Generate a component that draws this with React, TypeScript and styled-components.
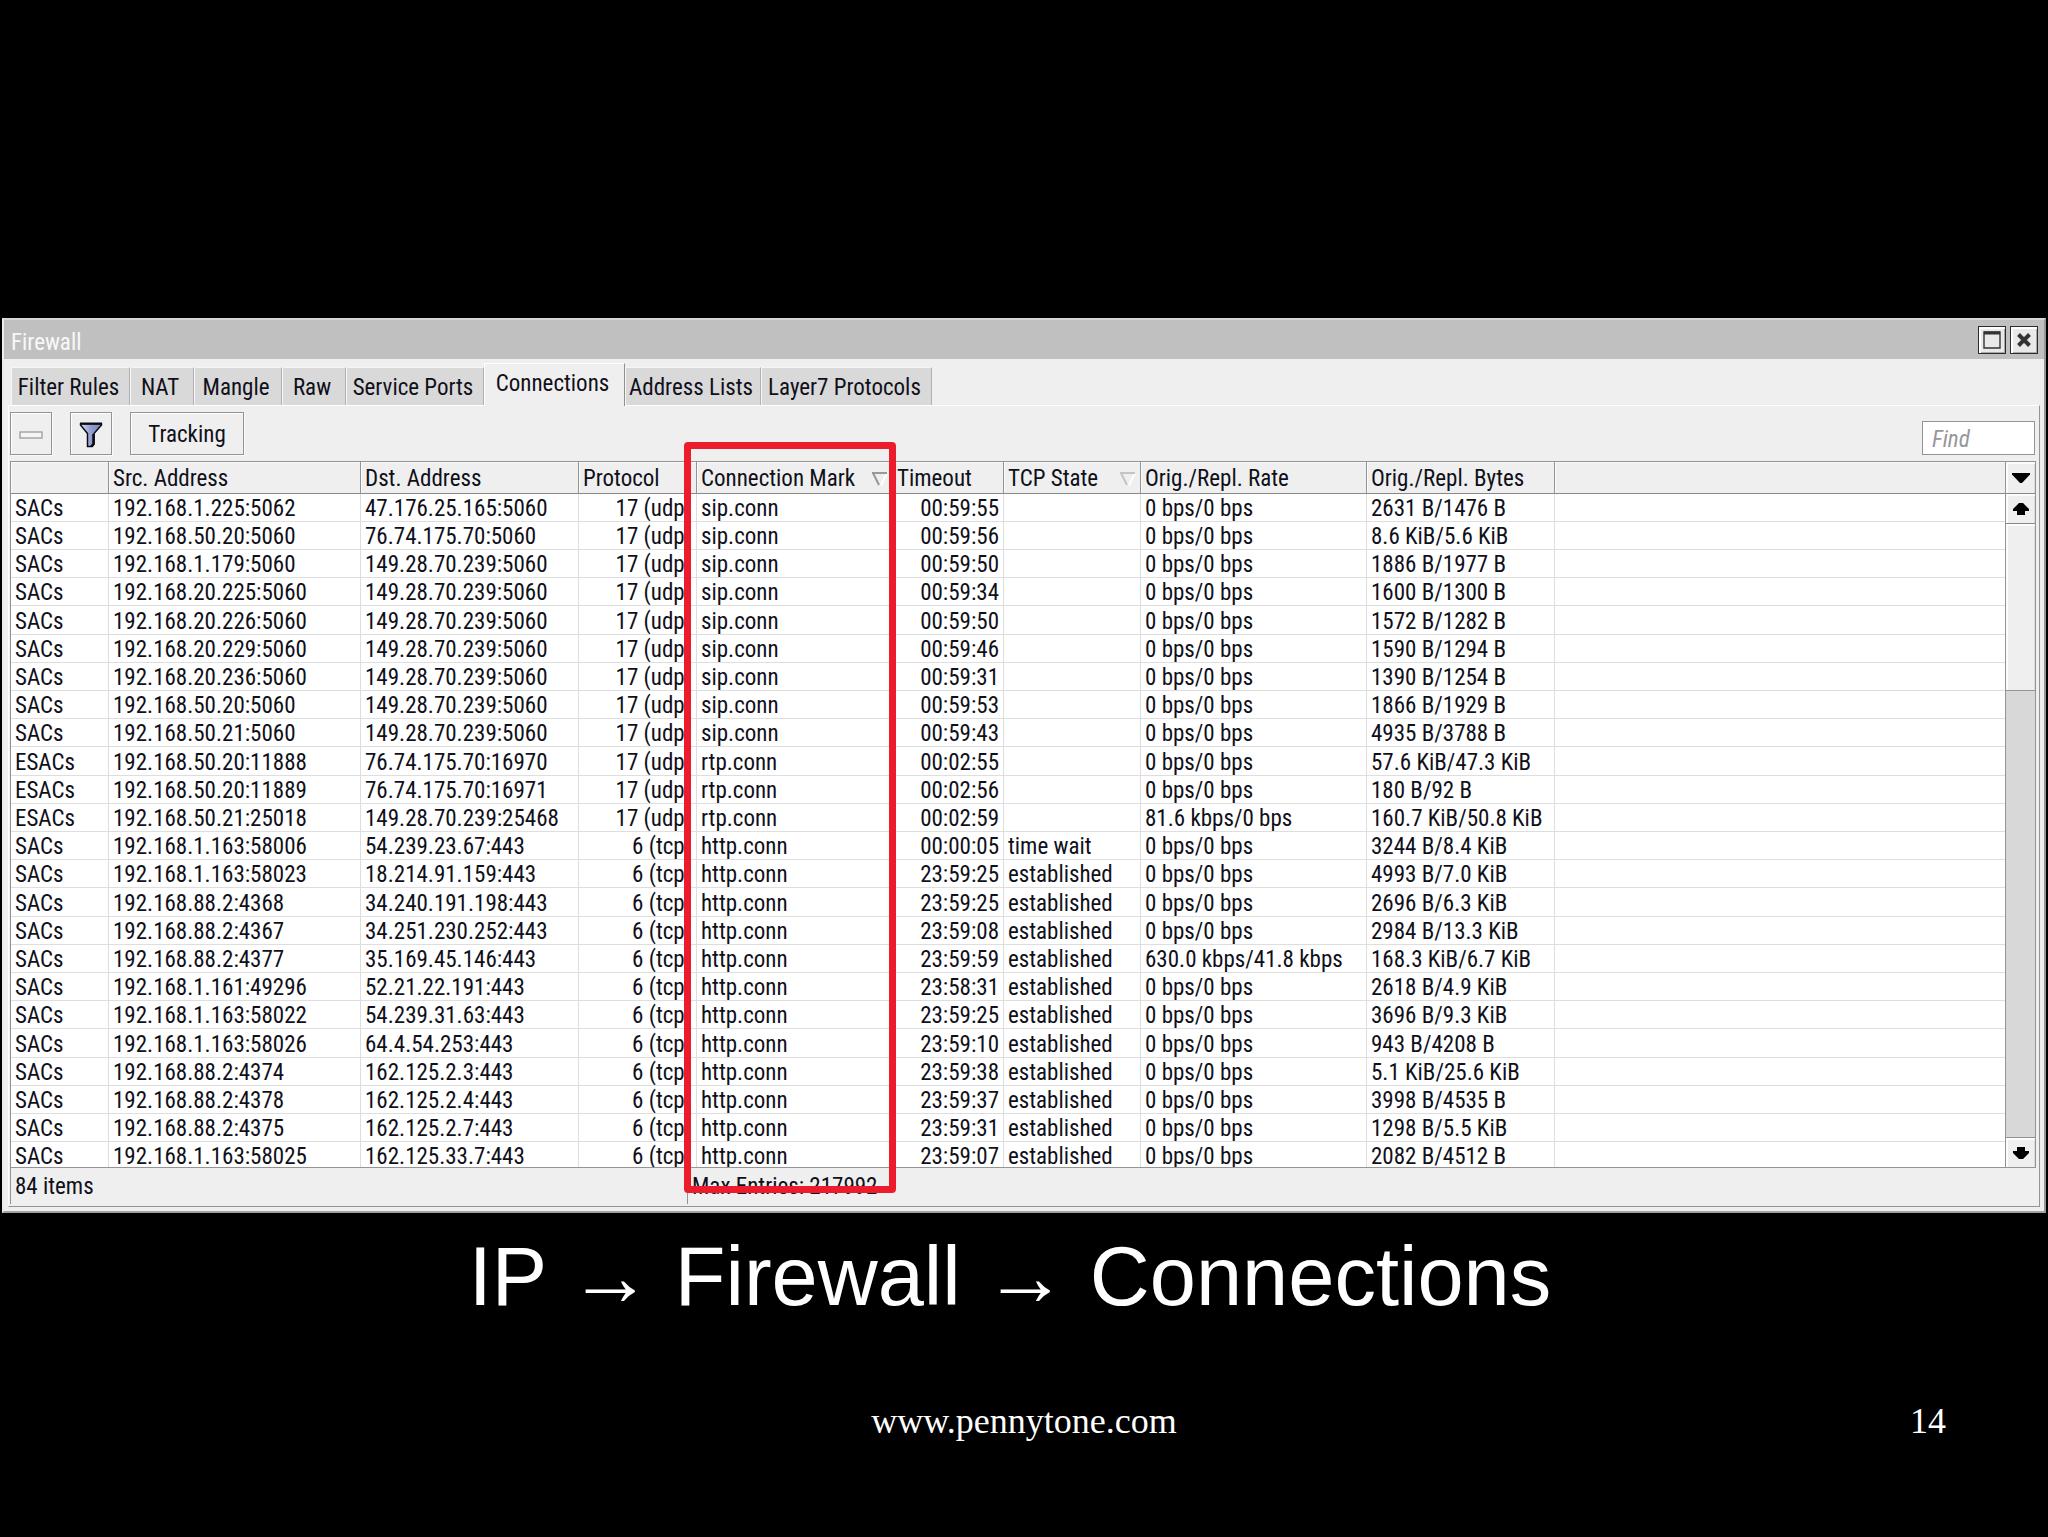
import React from "react";
import styled, { createGlobalStyle } from "styled-components";

const GlobalStyle = createGlobalStyle`
  *, *::before, *::after { box-sizing: border-box; }
  body { margin: 0; background: #000; }
  button, input { font: inherit; color: inherit; border-radius: 0; }
`;

const LINE = "#949494";
const FACE = "#efefef";

const Slide = styled.main`
  min-height: 100vh;
  padding: 318px 2px 0;
  background: #000;
  color: #fff;
`;

const Window = styled.section`
  border: 2px solid;
  border-color: #d6d6d6 #979797 #a2a2a2 #ececec;
  background: ${FACE};
  color: #10101a;
  font-family: "Roboto Condensed", "Liberation Sans Narrow", "Arial Narrow", sans-serif;
  font-size: 23px;
  line-height: 28px;
`;

const TitleBar = styled.header`
  display: flex;
  align-items: center;
  justify-content: space-between;
  height: 39px;
  padding: 0 6px 0 7px;
  background: #c0c0c0;
`;

const Title = styled.h2`
  margin: 0;
  padding-top: 6px;
  font: inherit;
  color: #f8f8f8;
`;

const WindowButtons = styled.div`
  display: flex;
  gap: 4px;
`;

const WindowButton = styled.button`
  display: flex;
  align-items: center;
  justify-content: center;
  width: 28px;
  height: 28px;
  padding: 0;
  border: 1px solid #2c2c2c;
  background: #e9e9e9;
  box-shadow: inset 2px 2px #fff, inset -1px -1px #a8a8a8;
`;

const Tabs = styled.div`
  display: flex;
  align-items: flex-end;
  height: 46px;
  padding-left: 7px;
`;

const Tab = styled.button<{ $width: number; $active?: boolean }>`
  position: relative;
  z-index: ${(p) => (p.$active ? 1 : 0)};
  width: ${(p) => p.$width}px;
  height: ${(p) => (p.$active ? 43 : 38)}px;
  margin-bottom: ${(p) => (p.$active ? -1 : 0)}px;
  padding: ${(p) => (p.$active ? "0 4px 2px 0" : "2px 4px 0 0")};
  border: 0 solid;
  border-width: 1px 1px 0;
  border-color: ${(p) => (p.$active ? "#fff #8f8f8f #fff #fff" : "#f6f6f6 #b0b0b0 #fff #f6f6f6")};
  background: ${(p) => (p.$active ? FACE : "#d9d9d9")};
  white-space: nowrap;
`;

const Panel = styled.div`
  position: relative;
  margin: 0 4px;
  margin-bottom: 4px;
  padding: 6px 3px 2px 1px;
  border: 1px solid;
  border-color: #fff ${LINE} ${LINE} #fff;
`;

const Toolbar = styled.div`
  display: flex;
  gap: 18px;
  height: 43px;
  margin-bottom: 6px;
`;

const ToolButton = styled.button<{ $wide?: boolean }>`
  display: flex;
  align-items: center;
  justify-content: center;
  width: ${(p) => (p.$wide ? 114 : 42)}px;
  padding: 2px 0 0;
  border: 1px solid ${LINE};
  background: ${FACE};
  box-shadow: inset 1px 1px #fff, 1px 1px #fafafa;
`;

const Search = styled.input`
  align-self: flex-end;
  width: 113px;
  height: 34px;
  margin-left: auto;
  margin-right: 1px;
  padding: 2px 9px 0;
  border: 1px solid ${LINE};
  background: #fff;
  &::placeholder {
    color: #96969c;
    font-style: italic;
    opacity: 1;
  }
`;

const Grid = styled.div`
  display: flex;
  height: 707px;
  border: 1px solid ${LINE};
  background: #fff;
  overflow: hidden;
`;

const Table = styled.table`
  flex: 1;
  width: 100%;
  align-self: flex-start;
  table-layout: fixed;
  border-collapse: separate;
  border-spacing: 0;
`;

const Th = styled.th`
  height: 32px;
  padding: 3px 4px 0;
  border-right: 1px solid ${LINE};
  border-bottom: 1px solid #888;
  background: ${FACE};
  box-shadow: inset 1px 1px #fafafa;
  font-weight: normal;
  text-align: left;
  white-space: nowrap;
  overflow: hidden;
  &:last-child { border-right: 0; }
`;

const HeadLabel = styled.span`
  display: flex;
  align-items: center;
  justify-content: space-between;
`;

const Row = styled.tr`
  height: 28px;
  &:nth-child(5n) { height: 29px; }
`;

const Td = styled.td<{ $right?: boolean }>`
  padding: 2px 4px 0;
  border-right: 1px solid #dedede;
  border-bottom: 1px solid #dedede;
  line-height: 25px;
  text-align: ${(p) => (p.$right ? "right" : "left")};
  white-space: nowrap;
  overflow: hidden;
  &:last-child { border-right: 0; }
`;

const ScrollBar = styled.div`
  display: flex;
  flex-direction: column;
  width: 30px;
  border-left: 1px solid ${LINE};
  background: #d8d8d8;
`;

const ScrollButton = styled.button<{ $head?: boolean }>`
  display: flex;
  align-items: center;
  justify-content: center;
  height: ${(p) => (p.$head ? 32 : 30)}px;
  padding: 0;
  border: 0;
  border-bottom: 1px solid #888;
  background: ${FACE};
  box-shadow: inset 2px 2px #fcfcfc, inset -1px 0 #dcdcdc;
`;

const Thumb = styled.div`
  height: 167px;
  border-bottom: 1px solid ${LINE};
  background: ${FACE};
  box-shadow: inset 2px 2px #fcfcfc, inset -1px 0 #dcdcdc;
`;

const DownButton = styled(ScrollButton)`
  margin-top: auto;
  border-top: 1px solid ${LINE};
  border-bottom: 0;
`;

const StatusBar = styled.footer`
  display: flex;
  height: 36px;
  border-left: 1px solid ${LINE};
`;

const StatusCell = styled.div<{ $first?: boolean }>`
  width: ${(p) => (p.$first ? "677px" : "auto")};
  padding: 5px 4px 0;
  border-right: ${(p) => (p.$first ? `1px solid ${LINE}` : "0")};
`;

const Highlight = styled.div`
  position: absolute;
  top: 36px;
  left: 675px;
  width: 212px;
  height: 751px;
  border: 7px solid #ed1c2c;
  border-radius: 4px;
  pointer-events: none;
`;

const Caption = styled.h1`
  margin: 18px 28px 0 0;
  font: 83px/92px "Liberation Sans", Arial, sans-serif;
  text-align: center;
`;

const Footer = styled.footer`
  display: grid;
  grid-template-columns: 1fr auto 1fr;
  margin-top: 78px;
  padding: 0 100px;
  font: 36px/40px "Liberation Serif", "Times New Roman", serif;
`;

const Site = styled.span`
  grid-column: 2;
`;

const PageNumber = styled.span`
  text-align: right;
`;

const MarkerIcon = ({ faint }: { faint?: boolean }) => (
  <svg width="16" height="14" viewBox="0 0 16 14" fill="none" aria-hidden="true">
    <path d="M15 1 9 13" stroke="#fff" strokeWidth="2" />
    <path d="M0 1H15M1 1L7 13" stroke={faint ? "#c4c4c4" : "#989898"} strokeWidth="2" />
  </svg>
);

const MaximizeIcon = () => (
  <svg width="18" height="18" viewBox="0 0 18 18" aria-hidden="true">
    <path d="M1 1H17V17H1Z" fill="none" stroke="#333" strokeWidth="1.4" />
    <path d="M1 2H17" stroke="#333" strokeWidth="3" />
  </svg>
);

const CloseIcon = () => (
  <svg width="14" height="14" viewBox="0 0 14 14" aria-hidden="true">
    <path d="M1.500 1.500 12.500 12.500M12.500 1.500 1.500 12.500" stroke="#333" strokeWidth="4" />
  </svg>
);

const RemoveIcon = () => (
  <svg width="24" height="8" viewBox="0 0 24 8" aria-hidden="true">
    <rect x="1" y="1" width="22" height="6" fill="#f5f5f5" stroke="#a2a2a2" strokeWidth="1.4" />
  </svg>
);

const FunnelIcon = () => (
  <svg width="24" height="26" viewBox="0 0 24 26" aria-hidden="true">
    <defs>
      <linearGradient id="funnel" x1="0" x2="1">
        <stop offset="0" stopColor="#d5dcf2" />
        <stop offset="0.5" stopColor="#8f9dd0" />
        <stop offset="1" stopColor="#7483bb" />
      </linearGradient>
    </defs>
    <path d="M1.500 2H22.500V3L15 11.500V22L13 24.500H8.500V11.500L1.500 3Z" fill="url(#funnel)" stroke="#0a0a12" strokeWidth="1.500" />
    <path d="M1 1.500H23" stroke="#0a0a12" strokeWidth="2" />
    <path d="M14.500 12V22L12.500 24.500" fill="none" stroke="#0a0a12" strokeWidth="2.500" />
  </svg>
);

const MenuIcon = () => (
  <svg width="18" height="10" viewBox="0 0 18 10" aria-hidden="true">
    <path d="M0 0H18V1.500L10 10H8L0 1.500Z" />
  </svg>
);

const ArrowIcon = ({ down }: { down?: boolean }) => (
  <svg width="16" height="12" viewBox="0 0 16 12" aria-hidden="true">
    <path d={down ? "M4 0H12V4H16V6L10 12H6L0 6V4H4Z" : "M4 12H12V8H16V6L10 0H6L0 6V8H4Z"} />
  </svg>
);

const tabs = [
  { label: "Filter Rules", width: 119 },
  { label: "NAT", width: 64 },
  { label: "Mangle", width: 88 },
  { label: "Raw", width: 64 },
  { label: "Service Ports", width: 138 },
  { label: "Connections", width: 141, active: true },
  { label: "Address Lists", width: 136 },
  { label: "Layer7 Protocols", width: 171 },
];

const columns: { label: string; width?: number; marker?: "strong" | "faint" }[] = [
  { label: "", width: 98 },
  { label: "Src. Address", width: 252 },
  { label: "Dst. Address", width: 218 },
  { label: "Protocol", width: 118 },
  { label: "Connection Mark", width: 196, marker: "strong" },
  { label: "Timeout", width: 111 },
  { label: "TCP State", width: 137, marker: "faint" },
  { label: "Orig./Repl. Rate", width: 226 },
  { label: "Orig./Repl. Bytes", width: 188 },
  { label: "" },
];

const UDP = "17 (udp)";
const TCP = "6 (tcp)";
const IDLE = "0 bps/0 bps";

const rows: string[][] = [
  ["SACs", "192.168.1.225:5062", "47.176.25.165:5060", UDP, "sip.conn", "00:59:55", "", IDLE, "2631 B/1476 B"],
  ["SACs", "192.168.50.20:5060", "76.74.175.70:5060", UDP, "sip.conn", "00:59:56", "", IDLE, "8.6 KiB/5.6 KiB"],
  ["SACs", "192.168.1.179:5060", "149.28.70.239:5060", UDP, "sip.conn", "00:59:50", "", IDLE, "1886 B/1977 B"],
  ["SACs", "192.168.20.225:5060", "149.28.70.239:5060", UDP, "sip.conn", "00:59:34", "", IDLE, "1600 B/1300 B"],
  ["SACs", "192.168.20.226:5060", "149.28.70.239:5060", UDP, "sip.conn", "00:59:50", "", IDLE, "1572 B/1282 B"],
  ["SACs", "192.168.20.229:5060", "149.28.70.239:5060", UDP, "sip.conn", "00:59:46", "", IDLE, "1590 B/1294 B"],
  ["SACs", "192.168.20.236:5060", "149.28.70.239:5060", UDP, "sip.conn", "00:59:31", "", IDLE, "1390 B/1254 B"],
  ["SACs", "192.168.50.20:5060", "149.28.70.239:5060", UDP, "sip.conn", "00:59:53", "", IDLE, "1866 B/1929 B"],
  ["SACs", "192.168.50.21:5060", "149.28.70.239:5060", UDP, "sip.conn", "00:59:43", "", IDLE, "4935 B/3788 B"],
  ["ESACs", "192.168.50.20:11888", "76.74.175.70:16970", UDP, "rtp.conn", "00:02:55", "", IDLE, "57.6 KiB/47.3 KiB"],
  ["ESACs", "192.168.50.20:11889", "76.74.175.70:16971", UDP, "rtp.conn", "00:02:56", "", IDLE, "180 B/92 B"],
  ["ESACs", "192.168.50.21:25018", "149.28.70.239:25468", UDP, "rtp.conn", "00:02:59", "", "81.6 kbps/0 bps", "160.7 KiB/50.8 KiB"],
  ["SACs", "192.168.1.163:58006", "54.239.23.67:443", TCP, "http.conn", "00:00:05", "time wait", IDLE, "3244 B/8.4 KiB"],
  ["SACs", "192.168.1.163:58023", "18.214.91.159:443", TCP, "http.conn", "23:59:25", "established", IDLE, "4993 B/7.0 KiB"],
  ["SACs", "192.168.88.2:4368", "34.240.191.198:443", TCP, "http.conn", "23:59:25", "established", IDLE, "2696 B/6.3 KiB"],
  ["SACs", "192.168.88.2:4367", "34.251.230.252:443", TCP, "http.conn", "23:59:08", "established", IDLE, "2984 B/13.3 KiB"],
  ["SACs", "192.168.88.2:4377", "35.169.45.146:443", TCP, "http.conn", "23:59:59", "established", "630.0 kbps/41.8 kbps", "168.3 KiB/6.7 KiB"],
  ["SACs", "192.168.1.161:49296", "52.21.22.191:443", TCP, "http.conn", "23:58:31", "established", IDLE, "2618 B/4.9 KiB"],
  ["SACs", "192.168.1.163:58022", "54.239.31.63:443", TCP, "http.conn", "23:59:25", "established", IDLE, "3696 B/9.3 KiB"],
  ["SACs", "192.168.1.163:58026", "64.4.54.253:443", TCP, "http.conn", "23:59:10", "established", IDLE, "943 B/4208 B"],
  ["SACs", "192.168.88.2:4374", "162.125.2.3:443", TCP, "http.conn", "23:59:38", "established", IDLE, "5.1 KiB/25.6 KiB"],
  ["SACs", "192.168.88.2:4378", "162.125.2.4:443", TCP, "http.conn", "23:59:37", "established", IDLE, "3998 B/4535 B"],
  ["SACs", "192.168.88.2:4375", "162.125.2.7:443", TCP, "http.conn", "23:59:31", "established", IDLE, "1298 B/5.5 KiB"],
  ["SACs", "192.168.1.163:58025", "162.125.33.7:443", TCP, "http.conn", "23:59:07", "established", IDLE, "2082 B/4512 B"],
];

export default function App() {
  return (
    <Slide>
      <GlobalStyle />
      <Window>
        <TitleBar>
          <Title>Firewall</Title>
          <WindowButtons>
            <WindowButton aria-label="Maximize"><MaximizeIcon /></WindowButton>
            <WindowButton aria-label="Close"><CloseIcon /></WindowButton>
          </WindowButtons>
        </TitleBar>
        <Tabs role="tablist">
          {tabs.map((t) => (
            <Tab key={t.label} role="tab" aria-selected={!!t.active} $active={t.active} $width={t.width}>
              {t.label}
            </Tab>
          ))}
        </Tabs>
        <Panel>
          <Toolbar>
            <ToolButton aria-label="Remove"><RemoveIcon /></ToolButton>
            <ToolButton aria-label="Filter"><FunnelIcon /></ToolButton>
            <ToolButton $wide>Tracking</ToolButton>
            <Search type="search" placeholder="Find" aria-label="Find" />
          </Toolbar>
          <Grid>
            <Table>
              <colgroup>
                {columns.map((c, i) => <col key={i} width={c.width} />)}
              </colgroup>
              <thead>
                <tr>
                  {columns.map((c, i) => (
                    <Th key={i} scope="col">
                      <HeadLabel>
                        {c.label}
                        {c.marker && <MarkerIcon faint={c.marker === "faint"} />}
                      </HeadLabel>
                    </Th>
                  ))}
                </tr>
              </thead>
              <tbody>
                {rows.map((r, i) => (
                  <Row key={i}>
                    {r.map((v, j) => <Td key={j} $right={j === 3 || j === 5}>{v}</Td>)}
                    <Td />
                  </Row>
                ))}
              </tbody>
            </Table>
            <ScrollBar>
              <ScrollButton $head aria-label="Choose columns"><MenuIcon /></ScrollButton>
              <ScrollButton aria-label="Scroll up"><ArrowIcon /></ScrollButton>
              <Thumb />
              <DownButton aria-label="Scroll down"><ArrowIcon down /></DownButton>
            </ScrollBar>
          </Grid>
          <StatusBar>
            <StatusCell $first>84 items</StatusCell>
            <StatusCell>Max Entries: 217992</StatusCell>
          </StatusBar>
          <Highlight />
        </Panel>
      </Window>
      <Caption>IP → Firewall → Connections</Caption>
      <Footer>
        <Site>www.pennytone.com</Site>
        <PageNumber>14</PageNumber>
      </Footer>
    </Slide>
  );
}
